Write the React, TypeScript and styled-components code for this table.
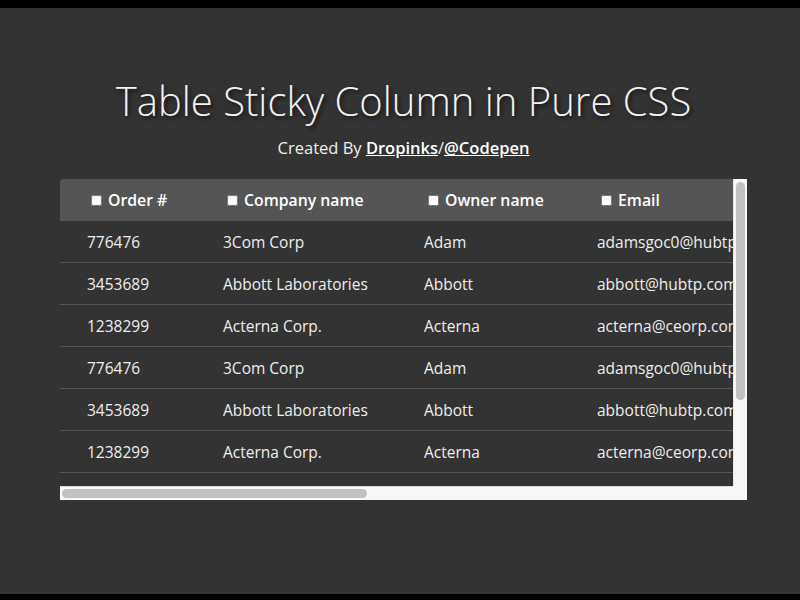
import React from "react";
import styled, { createGlobalStyle } from "styled-components";

const Global = createGlobalStyle`
  html { background: #000; }
  body {
    margin: 0;
    padding-top: 8px;
    font-family: "Open Sans", "Noto Sans", sans-serif;
  }
`;

const Page = styled.main`
  box-sizing: border-box;
  height: 586px;
  background: #333;
  color: #eee;
  display: flex;
  flex-direction: column;
  align-items: center;
  padding: 70px 0 0 7px;
`;

const Title = styled.h1`
  margin: 0;
  font-size: 40px;
  font-weight: 300;
  line-height: 46px;
  color: #f2f2f2;
  text-shadow: 2px 2px 4px rgba(0, 0, 0, 0.7);
`;

const Credit = styled.p`
  margin: 13px 0 20px;
  font-size: 16.5px;
  line-height: 22px;
  color: #eee;
`;

const Link = styled.a`
  color: #fff;
  font-weight: 600;
  text-decoration: underline;
`;

const Frame = styled.div`
  width: 687px;
  height: 321px;
  display: grid;
  grid-template-columns: 673px 14px;
  grid-template-rows: 307px 14px;
  background: #f8f8f8;
  border-radius: 5px 0 0 0;
  overflow: hidden;
`;

const Viewport = styled.div`
  overflow: hidden;
  background: #333;
`;

const VTrack = styled.div`
  box-sizing: border-box;
  border-left: 1px solid #e6e6e6;
  padding: 3px 2px 0 2px;
  background: #f8f8f8;
`;

const VThumb = styled.div`
  height: 218px;
  border-radius: 5px;
  background: #c1c1c1;
`;

const HTrack = styled.div`
  box-sizing: border-box;
  border-top: 1px solid #d9d9d9;
  padding: 2px 0 0 2px;
  background: #f8f8f8;
`;

const HThumb = styled.div`
  width: 305px;
  height: 9px;
  border-radius: 5px;
  background: #c1c1c1;
`;

const Corner = styled.div`
  background: #f8f8f8;
`;

const Table = styled.table`
  border-collapse: separate;
  border-spacing: 0;
  font-size: 15.5px;
  white-space: nowrap;
`;

const Head = styled.th<{ $w: number }>`
  position: sticky;
  top: 0;
  z-index: 1;
  width: ${(p) => p.$w}px;
  min-width: ${(p) => p.$w}px;
  box-sizing: border-box;
  height: 42px;
  padding: 0 10px 0 27px;
  background: #555;
  color: #fff;
  font-size: 15.8px;
  font-weight: 600;
  text-align: left;
  &:first-child {
    left: 0;
    z-index: 3;
  }
`;

const HeadLabel = styled.label`
  display: inline-flex;
  align-items: center;
  gap: 3px;
`;

const Check = styled.input`
  margin: 0 3px 0 4px;
  width: 11px;
  height: 11px;
`;

const Cell = styled.td`
  box-sizing: border-box;
  height: 42px;
  padding: 0 10px 0 27px;
  border-bottom: 1px solid #555;
  color: #eee;
  background: #333;
  &:first-child {
    position: sticky;
    left: 0;
    z-index: 2;
  }
`;

const columns = [
  { label: "Order #", w: 136 },
  { label: "Company name", w: 201 },
  { label: "Owner name", w: 173 },
  { label: "Email", w: 250 },
  { label: "Phone", w: 180 },
  { label: "Address", w: 230 },
  { label: "City", w: 160 },
  { label: "Country", w: 155 },
];

const base = [
  ["776476", "3Com Corp", "Adam", "adamsgoc0@hubtp.com", "+1 (555) 201-4410", "110 Market Street", "San Jose", "USA"],
  ["3453689", "Abbott Laboratories", "Abbott", "abbott@hubtp.com", "+1 (555) 384-1120", "100 Abbott Park Rd", "Chicago", "USA"],
  ["1238299", "Acterna Corp.", "Acterna", "acterna@ceorp.com", "+1 (555) 734-9012", "12410 Milestone Ctr", "Germantown", "USA"],
];
const rows = [...base, ...base, ...base];

export default function App() {
  return (
    <>
      <Global />
      <Page>
        <Title>Table Sticky Column in Pure CSS</Title>
        <Credit>
          Created By <Link href="#">Dropinks</Link>/<Link href="#">@Codepen</Link>
        </Credit>
        <Frame>
          <Viewport>
            <Table>
              <thead>
                <tr>
                  {columns.map((c) => (
                    <Head key={c.label} $w={c.w}>
                      <HeadLabel>
                        <Check type="checkbox" />
                        {c.label}
                      </HeadLabel>
                    </Head>
                  ))}
                </tr>
              </thead>
              <tbody>
                {rows.map((r, i) => (
                  <tr key={i}>
                    {r.map((v, j) => (
                      <Cell key={j}>{v}</Cell>
                    ))}
                  </tr>
                ))}
              </tbody>
            </Table>
          </Viewport>
          <VTrack>
            <VThumb />
          </VTrack>
          <HTrack>
            <HThumb />
          </HTrack>
          <Corner />
        </Frame>
      </Page>
    </>
  );
}
